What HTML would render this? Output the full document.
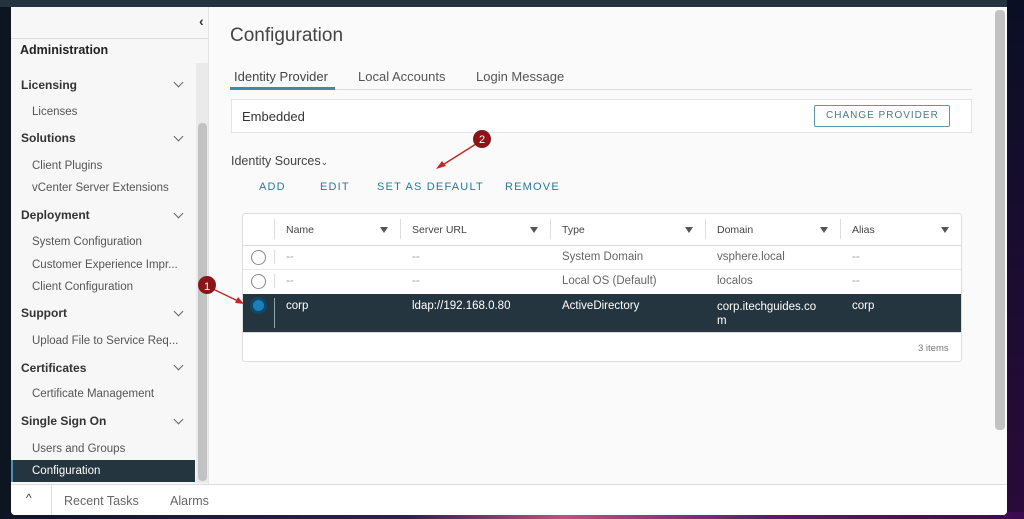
<!DOCTYPE html>
<html><head><style>
*{margin:0;padding:0;box-sizing:border-box}
body{width:1024px;height:519px;overflow:hidden;position:relative;font-family:"Liberation Sans",sans-serif;background:#0d1520}
.a{position:absolute}
.t{position:absolute;white-space:nowrap}
.sh{font-size:12px;font-weight:bold;color:#333}
.si{font-size:11.5px;color:#555}
.chev{position:absolute;width:7px;height:7px;border-right:1.5px solid #666;border-bottom:1.5px solid #666;transform:rotate(45deg)}
.th{font-size:10.5px;color:#444;top:224px}
.td{font-size:11.5px;color:#666}
.fl{position:absolute;top:227px;width:0;height:0;border-left:4px solid transparent;border-right:4px solid transparent;border-top:6px solid #555}
.rad{position:absolute;left:251px;width:15px;height:15px;border:1.5px solid #888;border-radius:50%;background:#fff}
.act{font-size:11px;color:#2a7a9a;letter-spacing:1.2px;top:181px}
</style></head><body>
<div class="a" style="left:0;top:0;width:1024px;height:7px;background:#253341"></div>
<div class="a" style="left:1007px;top:0;width:17px;height:519px;background:linear-gradient(#0a0f25,#2a0a3a)"></div>
<div class="a" style="left:0;top:512px;width:1024px;height:7px;background:linear-gradient(90deg,#0d1525,#302050 40%,#c05080 55%,#5a1a70 75%,#3a0a50)"></div>
<div class="a" style="left:11px;top:7px;width:996px;height:508px;background:#fafafa;border-radius:0 0 4px 4px"></div>
<div class="a" style="left:11px;top:7px;width:198px;height:477px;background:#f7f7f7;border-right:1px solid #e4e4e4"></div>
<div class="a" style="left:11px;top:38px;width:198px;height:1px;background:#ddd"></div>
<div class="t" style="left:199px;top:13px;font-size:14px;font-weight:bold;color:#333">‹</div>
<div class="t" style="left:20px;top:43px;font-size:12.5px;font-weight:bold;color:#222">Administration</div>
<div class="a" style="left:196px;top:63px;width:12px;height:420px;background:#eaeaea"></div>
<div class="a" style="left:198px;top:123px;width:9px;height:358px;background:#c2c2c2;border-radius:4px"></div>
<div class="t sh" style="left:21px;top:78px">Licensing</div><div class="chev" style="left:175px;top:79px"></div>
<div class="t si" style="left:32px;top:106px">Licenses</div>
<div class="t sh" style="left:21px;top:131px">Solutions</div><div class="chev" style="left:175px;top:133px"></div>
<div class="t si" style="left:32px;top:160px">Client Plugins</div>
<div class="t si" style="left:32px;top:182px">vCenter Server Extensions</div>
<div class="t sh" style="left:21px;top:208px">Deployment</div><div class="chev" style="left:175px;top:210px"></div>
<div class="t si" style="left:32px;top:236px">System Configuration</div>
<div class="t si" style="left:32px;top:259px">Customer Experience Impr...</div>
<div class="t si" style="left:32px;top:281px">Client Configuration</div>
<div class="t sh" style="left:21px;top:306px">Support</div><div class="chev" style="left:175px;top:308px"></div>
<div class="t si" style="left:32px;top:335px">Upload File to Service Req...</div>
<div class="t sh" style="left:21px;top:361px">Certificates</div><div class="chev" style="left:175px;top:362px"></div>
<div class="t si" style="left:32px;top:388px">Certificate Management</div>
<div class="t sh" style="left:21px;top:414px">Single Sign On</div><div class="chev" style="left:175px;top:416px"></div>
<div class="t si" style="left:32px;top:443px">Users and Groups</div>
<div class="a" style="left:11px;top:460px;width:184px;height:22px;background:#253540;border-left:2px solid #4a90b8"></div>
<div class="t" style="left:32px;top:465px;font-size:11.5px;color:#fff">Configuration</div>
<div class="a" style="left:11px;top:484px;width:996px;height:31px;background:#fff;border-top:1px solid #ddd;border-radius:0 0 4px 4px"></div>
<div class="a" style="left:51px;top:485px;width:1px;height:30px;background:#e0e0e0"></div>
<div class="t" style="left:26px;top:491px;font-size:12px;color:#333">^</div>
<div class="t" style="left:64px;top:494px;font-size:12.5px;color:#666">Recent Tasks</div>
<div class="t" style="left:170px;top:494px;font-size:12.5px;color:#666">Alarms</div>
<div class="a" style="left:995px;top:10px;width:10px;height:420px;background:#c2c2c2;border-radius:4px"></div>
<div class="t" style="left:230px;top:25px;font-size:19px;color:#444">Configuration</div>
<div class="t" style="left:234px;top:69px;font-size:13px;color:#444">Identity Provider</div>
<div class="t" style="left:358px;top:69px;font-size:13px;color:#555">Local Accounts</div>
<div class="t" style="left:476px;top:69px;font-size:13px;color:#555">Login Message</div>
<div class="a" style="left:230px;top:89px;width:742px;height:1px;background:#ddd"></div>
<div class="a" style="left:230px;top:87px;width:105px;height:3px;background:#3a8ab8"></div>
<div class="a" style="left:231px;top:99px;width:741px;height:34px;background:#fff;border:1px solid #e4e4e4"></div>
<div class="t" style="left:242px;top:109px;font-size:13px;color:#333">Embedded</div>
<div class="a" style="left:814px;top:105px;width:136px;height:22px;border:1px solid #5a9aa8;border-radius:2px;background:#fff"></div>
<div class="t" style="left:826px;top:110px;font-size:10px;color:#4a7a8a;letter-spacing:1px">CHANGE PROVIDER</div>
<div class="t" style="left:231px;top:154px;font-size:12.5px;color:#444">Identity Sources<span style="font-size:9px">⌄</span></div>
<div class="t act" style="left:259px">ADD</div>
<div class="t act" style="left:320px">EDIT</div>
<div class="t act" style="left:377px">SET AS DEFAULT</div>
<div class="t act" style="left:505px">REMOVE</div>
<div class="a" style="left:242px;top:213px;width:720px;height:149px;background:#fff;border:1px solid #ddd;border-radius:3px"></div>
<div class="a" style="left:243px;top:245px;width:718px;height:1px;background:#ddd"></div>
<div class="a" style="left:243px;top:269px;width:718px;height:1px;background:#e8e8e8"></div>
<div class="a" style="left:243px;top:332px;width:718px;height:1px;background:#ddd"></div>
<div class="a" style="left:274px;top:219px;width:1px;height:20px;background:#ddd"></div>
<div class="a" style="left:400px;top:219px;width:1px;height:20px;background:#ddd"></div>
<div class="a" style="left:550px;top:219px;width:1px;height:20px;background:#ddd"></div>
<div class="a" style="left:705px;top:219px;width:1px;height:20px;background:#ddd"></div>
<div class="a" style="left:840px;top:219px;width:1px;height:20px;background:#ddd"></div>
<div class="t th" style="left:286px">Name</div><div class="fl" style="left:380px"></div>
<div class="t th" style="left:412px">Server URL</div><div class="fl" style="left:530px"></div>
<div class="t th" style="left:562px">Type</div><div class="fl" style="left:685px"></div>
<div class="t th" style="left:717px">Domain</div><div class="fl" style="left:820px"></div>
<div class="t th" style="left:852px">Alias</div><div class="fl" style="left:941px"></div>
<div class="rad" style="top:250px"></div>
<div class="a" style="left:274px;top:250px;width:1px;height:14px;background:#ddd"></div>
<div class="t td" style="left:286px;top:251px;color:#999">--</div><div class="t td" style="left:412px;top:251px;color:#999">--</div>
<div class="t td" style="left:562px;top:251px">System Domain</div><div class="t td" style="left:717px;top:251px">vsphere.local</div><div class="t td" style="left:852px;top:251px;color:#999">--</div>
<div class="rad" style="top:274px"></div>
<div class="a" style="left:274px;top:274px;width:1px;height:14px;background:#ddd"></div>
<div class="t td" style="left:286px;top:275px;color:#999">--</div><div class="t td" style="left:412px;top:275px;color:#999">--</div>
<div class="t td" style="left:562px;top:275px">Local OS (Default)</div><div class="t td" style="left:717px;top:275px">localos</div><div class="t td" style="left:852px;top:275px;color:#999">--</div>
<div class="a" style="left:243px;top:294px;width:718px;height:38px;background:#253540"></div>
<div class="a" style="left:250px;top:297px;width:17px;height:17px;border-radius:50%;background:#1a80b8;border:3px solid #0d4868"></div>
<div class="a" style="left:274px;top:298px;width:1px;height:30px;background:#8aa"></div>
<div class="t td" style="left:286px;top:300px;color:#fff">corp</div>
<div class="t td" style="left:412px;top:300px;color:#fff">ldap://192.168.0.80</div>
<div class="t td" style="left:562px;top:300px;color:#fff">ActiveDirectory</div>
<div class="t td" style="left:717px;top:300px;color:#fff;line-height:14px">corp.itechguides.co<br>m</div>
<div class="t td" style="left:852px;top:300px;color:#fff">corp</div>
<div class="t" style="left:918px;top:343px;font-size:9.5px;color:#777">3 items</div>
<svg class="a" style="left:0;top:0" width="1024" height="519">
<line x1="213" y1="289" x2="240" y2="302" stroke="#c0282a" stroke-width="1.5"/>
<polygon points="244,304 235,303 238,297" fill="#c0282a"/>
<line x1="476" y1="144" x2="441" y2="166" stroke="#c0282a" stroke-width="1.5"/>
<polygon points="436,169 442,161 446,166" fill="#c0282a"/>
<circle cx="207" cy="285" r="9" fill="#8a1418"/>
<text x="207" y="290" font-size="11" fill="#fff" text-anchor="middle" font-family="Liberation Sans">1</text>
<circle cx="482" cy="139" r="9" fill="#8a1418"/>
<text x="482" y="143" font-size="11" fill="#fff" text-anchor="middle" font-family="Liberation Sans">2</text>
</svg>
</body></html>
